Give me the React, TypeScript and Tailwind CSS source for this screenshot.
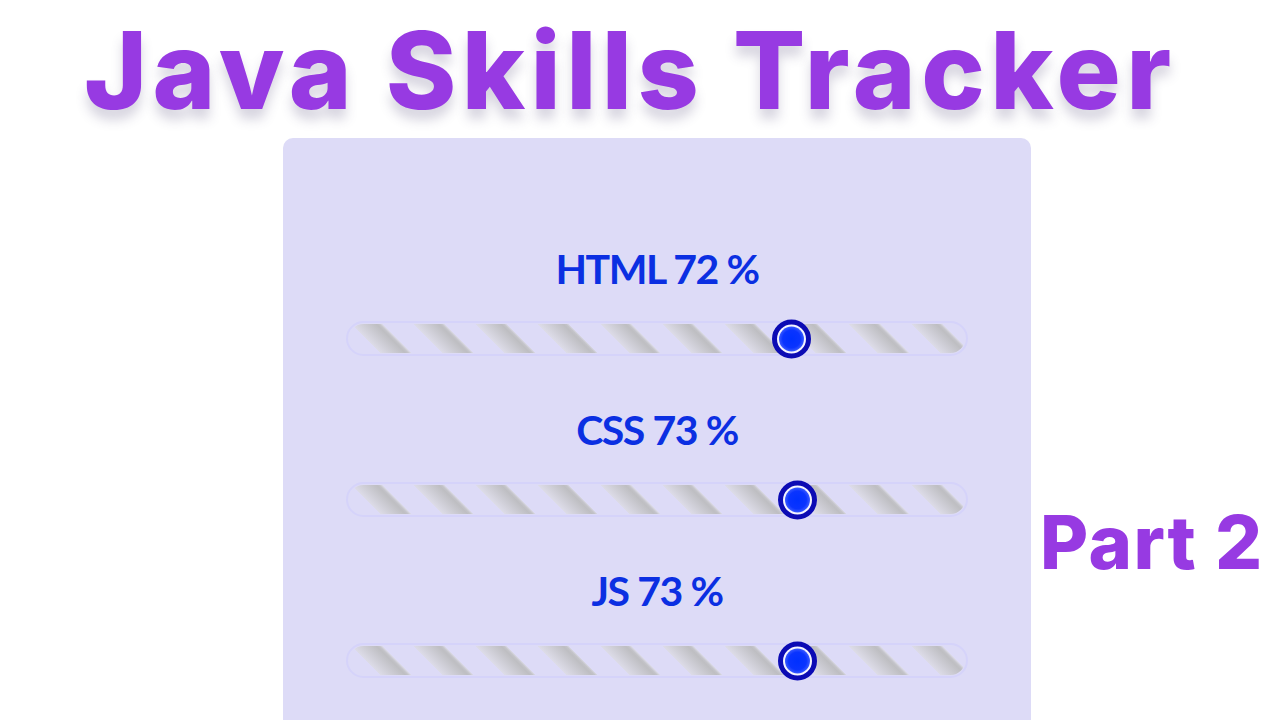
import React from 'react';

type Skill = { name: string; value: number };

const skills: Skill[] = [
    { name: 'HTML', value: 72 },
    { name: 'CSS', value: 73 },
    { name: 'JS', value: 73 },
];

const SkillSlider = ({ name, value }: Skill) => {
    return (
        <div className="flex flex-col items-center">
            <h2 className="font-['Lato',sans-serif] font-bold text-[41px] leading-none tracking-[-0.035em] text-[#0b2fe2]">
                {name} {value} %
            </h2>
            {/* striped track */}
            <div className="relative mt-[32px] w-full h-[35px] rounded-full border-2 border-[#d5d3fa]">
                <div className="absolute inset-[1px] rounded-full overflow-hidden bg-[image:repeating-linear-gradient(45deg,transparent_0px,transparent_22px,#dddce8_22px,#bebec2_40px,#c4c4c9_42px,#dcdbe8_44px)]" />
                {/* thumb */}
                <div
                    className="absolute top-1/2 -translate-y-1/2 w-[39px] h-[39px] rounded-full border-[5px] border-[#0c0bb4] bg-[#f4f4ff] p-[2px]"
                    style={{ left: `calc(${value}% - 21px)` }}
                >
                    <div className="w-full h-full rounded-full bg-[radial-gradient(circle,#0030ff_0%,#0a34ff_50%,#7d90ff_100%)]" />
                </div>
            </div>
        </div>
    );
};

export default function App() {
    return (
        <div className="w-[1280px] h-[720px] overflow-hidden bg-white">
            <h1 className="h-[138px] pt-[17px] pl-[84px] font-['Inter',sans-serif] font-extrabold text-[107px] leading-none tracking-[0.05em] text-[#973ae2] [text-shadow:0_10px_12px_rgba(70,60,110,0.22)] whitespace-nowrap">
                Java Skills Tracker
            </h1>
            <div className="flex items-start">
                <div className="ml-[283px] w-[748px] h-[600px] rounded-[10px] bg-[#dddbf7] px-[63px] pt-[110px] flex flex-col gap-[53px]">
                    {skills.map((s) => (
                        <SkillSlider key={s.name} name={s.name} value={s.value} />
                    ))}
                </div>
                <div className="ml-[9px] mt-[367px] font-['Inter',sans-serif] font-extrabold text-[74px] leading-none tracking-[0.02em] text-[#973ae2] whitespace-nowrap">
                    Part 2
                </div>
            </div>
        </div>
    );
}
